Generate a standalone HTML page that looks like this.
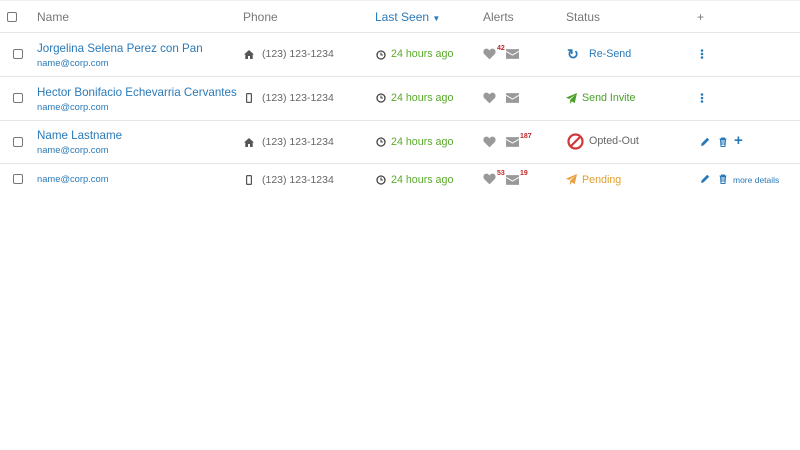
<!DOCTYPE html>
<html><head><style>
body{margin:0;width:800px;height:450px;background:#fff;font-family:"Liberation Sans",sans-serif;position:relative;overflow:hidden}
.a{position:absolute;white-space:nowrap}
.h{color:#777;font-size:12px;top:10px}
.line{position:absolute;left:0;width:800px;height:1px;background:#e6e6e6}
.cb{position:absolute;width:8px;height:8px;border:1px solid #777;border-radius:2px;background:#fff}
.nm{color:#2a7ab8;font-size:11.6px}
.em{color:#2a7ab8;font-size:9.4px}
.ph{color:#666;font-size:10.5px}
.gr{color:#5aaa2a;font-size:10.7px}
.sup{color:#c0282d;font-size:7px;font-weight:bold}
.blue{color:#2a7ab8}
</style></head><body>
<div class="line" style="top:0;background:#f0f0f0"></div>
<div class="cb" style="left:7px;top:12px"></div>
<div class="a h" style="left:37px">Name</div>
<div class="a h" style="left:243px">Phone</div>
<div class="a h" style="left:375px;color:#2a7ab8">Last Seen <span style="font-size:8px">▼</span></div>
<div class="a h" style="left:483px">Alerts</div>
<div class="a h" style="left:566px">Status</div>
<div class="a h" style="left:697px">+</div>
<div class="line" style="top:32px"></div>
<div class="line" style="top:76px"></div>
<div class="line" style="top:120px"></div>
<div class="line" style="top:163px"></div>

<svg width="0" height="0" style="position:absolute"><defs>
<symbol id="heart" viewBox="0 0 24 22"><path d="M12 21L2.5 11.5C-1 8 1 1 6.5 1 9 1 11 3 12 4.5 13 3 15 1 17.5 1 23 1 25 8 21.5 11.5z" fill="#999"/></symbol>
<symbol id="mail" viewBox="0 0 24 18"><path d="M0 0h24v3L12 10 0 3z M0 5l12 7 12-7v13H0z" fill="#999"/></symbol>
<symbol id="clock" viewBox="0 0 10 10"><circle cx="5" cy="5" r="4" fill="none" stroke="#444" stroke-width="1.3"/><path d="M5 2.5V5h2" stroke="#444" stroke-width="1.1" fill="none"/></symbol>
<symbol id="home" viewBox="0 0 10 9"><path d="M5 0L0 4.5h1.3V9h2.7V6h2v3h2.7V4.5H10z" fill="#555"/></symbol>
<symbol id="mob" viewBox="0 0 6 10"><rect x="0.6" y="0.6" width="4.8" height="8.8" rx="0.8" fill="none" stroke="#555" stroke-width="1.2"/></symbol>
<symbol id="pen" viewBox="0 0 10 10"><path d="M1 9l.6-2.6 5.6-5.6 2 2-5.6 5.6z" fill="#2a7ab8"/></symbol>
<symbol id="trash" viewBox="0 0 10 10"><path d="M1.5 2h7M3.5 2V1h3v1M2.5 3h5l-.5 6.5h-4z M4 4v4M6 4v4" stroke="#2a7ab8" stroke-width="1" fill="none"/></symbol>
<symbol id="dots" viewBox="0 0 4 10"><circle cx="2" cy="1.5" r="1.3" fill="#2a7ab8"/><circle cx="2" cy="5" r="1.3" fill="#2a7ab8"/><circle cx="2" cy="8.5" r="1.3" fill="#2a7ab8"/></symbol>
<symbol id="plane" viewBox="0 0 12 12"><path d="M12 0L0 5l3.5 1.5L10 2 4.5 7.5V12l2-3 3 2z" /></symbol>
</defs></svg>

<!-- row1 -->
<div class="cb" style="left:13px;top:49px"></div>
<div class="a nm" style="left:37px;top:42px">Jorgelina Selena Perez con Pan</div>
<div class="a em" style="left:37px;top:57px">name@corp.com</div>
<svg class="a" style="left:244px;top:50px" width="10" height="9"><use href="#home"/></svg>
<div class="a ph" style="left:262px;top:48px">(123) 123-1234</div>
<svg class="a" style="left:376px;top:50px" width="10" height="10"><use href="#clock"/></svg>
<div class="a gr" style="left:391px;top:48px">24 hours ago</div>
<svg class="a" style="left:483px;top:48px" width="13" height="12"><use href="#heart"/></svg>
<div class="a sup" style="left:497px;top:45px">42</div>
<svg class="a" style="left:506px;top:49px" width="13" height="10"><use href="#mail"/></svg>
<div class="a" style="left:567px;top:46px;color:#2a7ab8;font-size:14px;font-weight:bold">↻</div>
<div class="a blue" style="left:589px;top:48px;font-size:10.7px">Re-Send</div>
<svg class="a" style="left:700px;top:49px" width="4" height="10"><use href="#dots"/></svg>
<!-- row2 -->
<div class="cb" style="left:13px;top:93px"></div>
<div class="a nm" style="left:37px;top:86px">Hector Bonifacio Echevarria Cervantes</div>
<div class="a em" style="left:37px;top:101px">name@corp.com</div>
<svg class="a" style="left:246px;top:93px" width="6" height="10"><use href="#mob"/></svg>
<div class="a ph" style="left:262px;top:92px">(123) 123-1234</div>
<svg class="a" style="left:376px;top:93px" width="10" height="10"><use href="#clock"/></svg>
<div class="a gr" style="left:391px;top:92px">24 hours ago</div>
<svg class="a" style="left:483px;top:92px" width="13" height="12"><use href="#heart"/></svg>
<svg class="a" style="left:506px;top:93px" width="13" height="10"><use href="#mail"/></svg>
<svg class="a" style="left:566px;top:93px;fill:#4aa02a" width="11" height="11"><use href="#plane"/></svg>
<div class="a" style="left:582px;top:92px;color:#4aa02a;font-size:10.7px">Send Invite</div>
<svg class="a" style="left:700px;top:93px" width="4" height="10"><use href="#dots"/></svg>
<!-- row3 -->
<div class="cb" style="left:13px;top:137px"></div>
<div class="a nm" style="left:37px;top:129px">Name Lastname</div>
<div class="a em" style="left:37px;top:144px">name@corp.com</div>
<svg class="a" style="left:244px;top:138px" width="10" height="9"><use href="#home"/></svg>
<div class="a ph" style="left:262px;top:136px">(123) 123-1234</div>
<svg class="a" style="left:376px;top:137px" width="10" height="10"><use href="#clock"/></svg>
<div class="a gr" style="left:391px;top:136px">24 hours ago</div>
<svg class="a" style="left:483px;top:136px" width="13" height="12"><use href="#heart"/></svg>
<svg class="a" style="left:506px;top:137px" width="13" height="10"><use href="#mail"/></svg>
<div class="a sup" style="left:520px;top:133px">187</div>
<svg class="a" style="left:567px;top:133px" width="17" height="17"><circle cx="8.5" cy="8.5" r="7" fill="none" stroke="#d0393a" stroke-width="2.2"/><path d="M3.5 13.5L13.5 3.5" stroke="#d0393a" stroke-width="2.2"/></svg>
<div class="a" style="left:589px;top:135px;color:#666;font-size:10.7px">Opted-Out</div>
<svg class="a" style="left:700px;top:137px" width="10" height="10"><use href="#pen"/></svg>
<svg class="a" style="left:718px;top:137px" width="10" height="10"><use href="#trash"/></svg>
<div class="a" style="left:734px;top:132px;color:#2a7ab8;font-size:15px;font-weight:bold">+</div>
<!-- row4 -->
<div class="cb" style="left:13px;top:174px"></div>
<div class="a em" style="left:37px;top:173px">name@corp.com</div>
<svg class="a" style="left:246px;top:175px" width="6" height="10"><use href="#mob"/></svg>
<div class="a ph" style="left:262px;top:174px">(123) 123-1234</div>
<svg class="a" style="left:376px;top:175px" width="10" height="10"><use href="#clock"/></svg>
<div class="a gr" style="left:391px;top:174px">24 hours ago</div>
<svg class="a" style="left:483px;top:173px" width="13" height="12"><use href="#heart"/></svg>
<div class="a sup" style="left:497px;top:170px">53</div>
<svg class="a" style="left:506px;top:175px" width="13" height="10"><use href="#mail"/></svg>
<div class="a sup" style="left:520px;top:170px">19</div>
<svg class="a" style="left:566px;top:174px;fill:#e8a040" width="11" height="11"><use href="#plane"/></svg>
<div class="a" style="left:582px;top:174px;color:#e0a030;font-size:10.7px">Pending</div>
<svg class="a" style="left:700px;top:174px" width="10" height="10"><use href="#pen"/></svg>
<svg class="a" style="left:718px;top:174px" width="10" height="10"><use href="#trash"/></svg>
<div class="a" style="left:733px;top:175px;color:#2a7ab8;font-size:8.5px">more details</div>
</body></html>
